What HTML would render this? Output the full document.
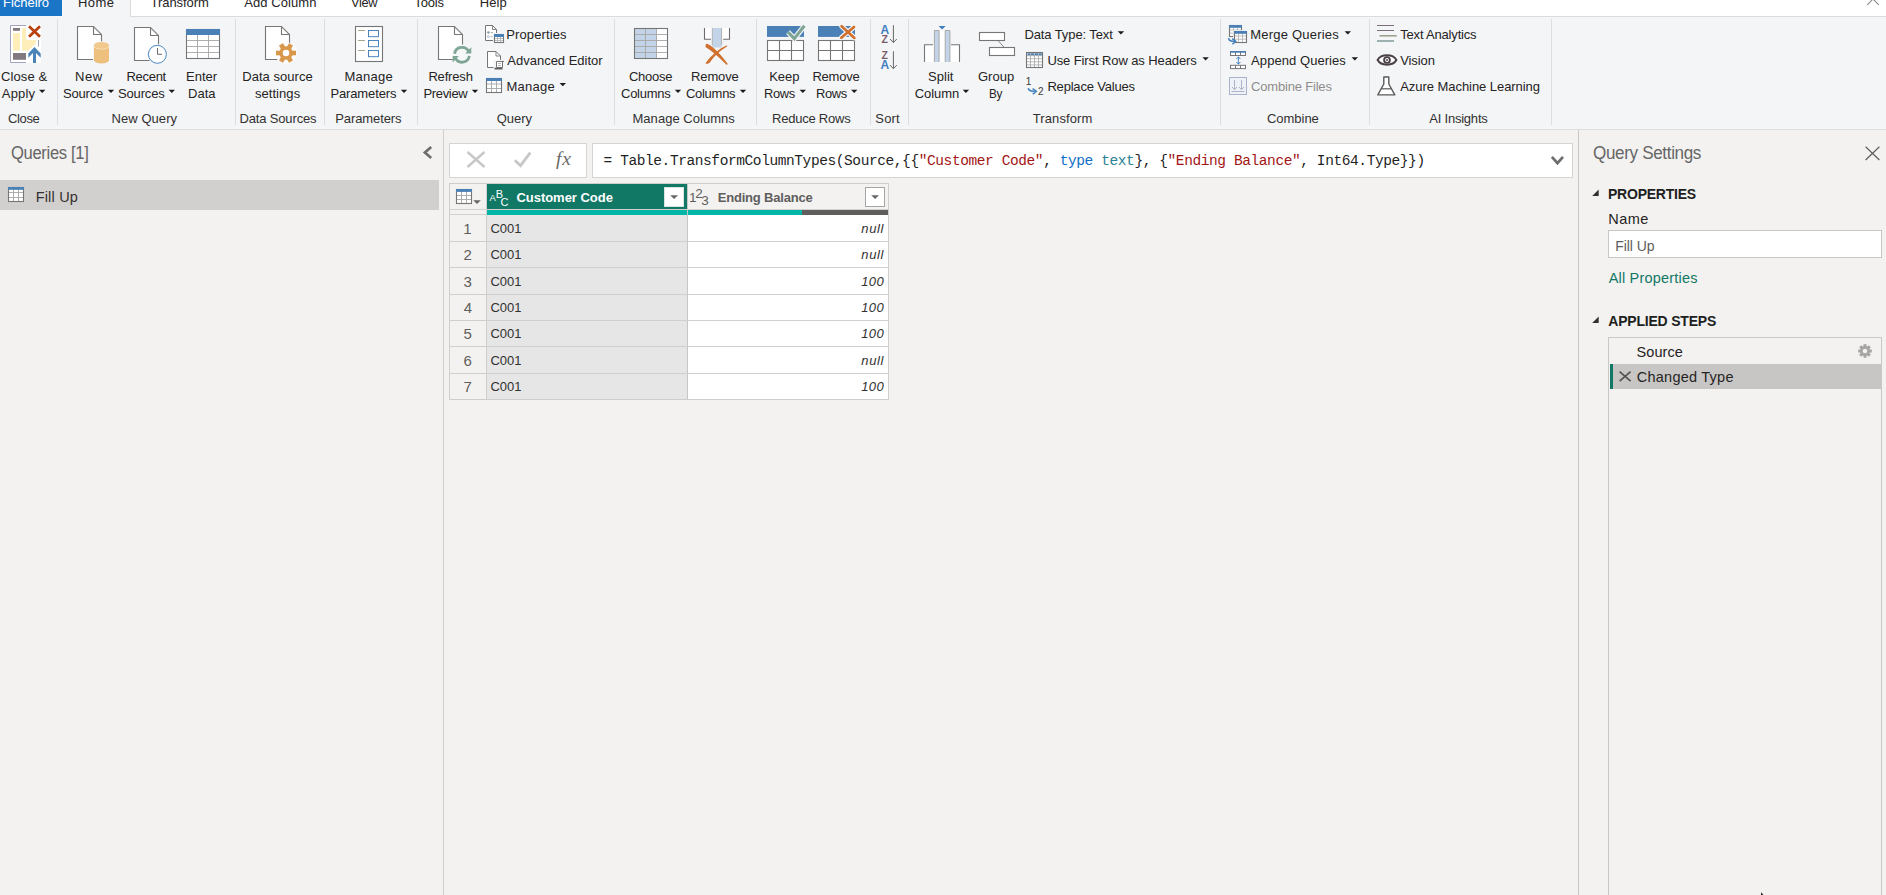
<!DOCTYPE html>
<html lang="en"><head><meta charset="utf-8"><title>Power Query Editor</title>
<style>
html,body{margin:0;padding:0}
body{width:1886px;height:895px;overflow:hidden;position:relative;background:#f3f2f1;font-family:"Liberation Sans",sans-serif}
.t{position:absolute;white-space:pre;line-height:1;transform-origin:0 50%}
.b{position:absolute;box-sizing:border-box}
svg{position:absolute;left:0;top:0;overflow:visible}
.f{position:absolute;white-space:pre;line-height:1;font-family:"Liberation Mono",monospace;color:#1f1f1f}
.f .s{color:#a31515}.f .k{color:#0f6fc6}.f .y{color:#2a8295}
</style></head>
<body>
<div class="b" style="left:0px;top:0px;width:1886px;height:17px;background:#ffffff;"></div>
<div class="b" style="left:130px;top:16px;width:1756px;height:1px;background:#dadbdc;"></div>
<div class="b" style="left:62px;top:0px;width:69px;height:17px;background:#f4f5f7;border-right:1px solid #dadbdc;"></div>
<div class="b" style="left:0px;top:0px;width:62px;height:16px;background:#1a75c7;"></div>
<div class="b" style="left:0px;top:16px;width:62px;height:1px;background:#f4f5f7;"></div>
<div class="b" style="left:0px;top:17px;width:1886px;height:112px;background:#f4f5f7;"></div>
<div class="b" style="left:0px;top:129px;width:1886px;height:1px;background:#dddddf;"></div>
<div class="b" style="left:57px;top:19px;width:1px;height:106px;background:#dddedf;"></div>
<div class="b" style="left:235px;top:19px;width:1px;height:106px;background:#dddedf;"></div>
<div class="b" style="left:324px;top:19px;width:1px;height:106px;background:#dddedf;"></div>
<div class="b" style="left:417px;top:19px;width:1px;height:106px;background:#dddedf;"></div>
<div class="b" style="left:614px;top:19px;width:1px;height:106px;background:#dddedf;"></div>
<div class="b" style="left:756px;top:19px;width:1px;height:106px;background:#dddedf;"></div>
<div class="b" style="left:870px;top:19px;width:1px;height:106px;background:#dddedf;"></div>
<div class="b" style="left:908px;top:19px;width:1px;height:106px;background:#dddedf;"></div>
<div class="b" style="left:1220px;top:19px;width:1px;height:106px;background:#dddedf;"></div>
<div class="b" style="left:1369px;top:19px;width:1px;height:106px;background:#dddedf;"></div>
<div class="b" style="left:1551px;top:19px;width:1px;height:106px;background:#dddedf;"></div>
<div class="b" style="left:0px;top:180px;width:439px;height:30px;background:#d2d0ce;"></div>
<div class="b" style="left:443px;top:130px;width:1px;height:765px;background:#d0cfce;"></div>
<div class="b" style="left:1578px;top:130px;width:1px;height:765px;background:#c8c7c6;"></div>
<div class="b" style="left:449px;top:143px;width:138px;height:35px;background:#ffffff;border:1px solid #d6d5d4;"></div>
<div class="b" style="left:592px;top:143px;width:981px;height:35px;background:#ffffff;border:1px solid #d6d5d4;"></div>
<div class="b" style="left:449px;top:183px;width:440px;height:217px;background:#f3f2f1;border:1px solid #cfcecd;"></div>
<div class="b" style="left:487px;top:184px;width:200px;height:25px;background:#117865;"></div>
<div class="b" style="left:450px;top:209px;width:438px;height:1px;background:#d2d1d0;"></div>
<div class="b" style="left:450px;top:214px;width:37px;height:1px;background:#d2d1d0;"></div>
<div class="b" style="left:487px;top:210px;width:200px;height:5px;background:#01b5a7;"></div>
<div class="b" style="left:688px;top:210px;width:114px;height:5px;background:#01b5a7;"></div>
<div class="b" style="left:802px;top:210px;width:86px;height:5px;background:#605e5c;"></div>
<div class="b" style="left:487px;top:215px;width:200px;height:184px;background:#e6e6e6;"></div>
<div class="b" style="left:688px;top:215px;width:200px;height:184px;background:#ffffff;"></div>
<div class="b" style="left:486px;top:184px;width:1px;height:215px;background:#cfcecd;"></div>
<div class="b" style="left:687px;top:184px;width:1px;height:215px;background:#c8c7c6;"></div>
<div class="b" style="left:450px;top:241px;width:438px;height:1px;background:#d0cfce;"></div>
<div class="b" style="left:450px;top:267px;width:438px;height:1px;background:#d0cfce;"></div>
<div class="b" style="left:450px;top:294px;width:438px;height:1px;background:#d0cfce;"></div>
<div class="b" style="left:450px;top:320px;width:438px;height:1px;background:#d0cfce;"></div>
<div class="b" style="left:450px;top:346px;width:438px;height:1px;background:#d0cfce;"></div>
<div class="b" style="left:450px;top:373px;width:438px;height:1px;background:#d0cfce;"></div>
<div class="b" style="left:664px;top:187px;width:20px;height:20px;background:#ffffff;border:1px solid #d8e4e0;"></div>
<div class="b" style="left:865px;top:187px;width:20px;height:20px;background:#ffffff;border:1px solid #a6a5a4;"></div>
<div class="b" style="left:1608px;top:230px;width:274px;height:28px;background:#ffffff;border:1px solid #c8c7c6;"></div>
<div class="b" style="left:1608px;top:337px;width:274px;height:570px;border:1px solid #c8c7c6;"></div>
<div class="b" style="left:1610px;top:364px;width:271px;height:25px;background:#c8c6c4;"></div>
<div class="b" style="left:1610px;top:364px;width:3px;height:25px;background:#117865;"></div>
<svg width="1886" height="895" viewBox="0 0 1886 895"><rect x="10" y="25" width="31" height="38" fill="#fff"/><path d="M26,25.5H10.5V62.5H26" fill="none" stroke="#a3a3bd" stroke-width="1"/><path d="M38.5,40V46.5" stroke="#a3a3bd" stroke-width="1"/><rect x="13" y="28" width="7" height="2.8" fill="#807a80"/><rect x="13" y="33" width="7" height="17.8" fill="#fdeeba"/><path d="M22,28H26V38.5L27.5,40H36.2V43L28,50.8H22Z" fill="#fdeeba"/><rect x="13" y="53" width="13" height="6.8" fill="#807a80"/><path d="M29,26.3L40,36.8M40,26.3L29,36.8" stroke="#b8410f" stroke-width="2.7"/><path d="M34.5,47L28.3,53.5V57.8L33,53V63H36V53L40.7,57.8V53.5Z" fill="#4a84b8"/><path d="M77.5,26.5H93.5L101.5,34.5V59.5H77.5Z" fill="#fff" stroke="#767676" stroke-width="1.1" stroke-linejoin="miter"/><path d="M93.5,26.5V34.5H101.5" fill="none" stroke="#767676" stroke-width="1.1"/><path d="M93.5,26.5L101.5,34.5" stroke="#9a9a86" stroke-width="0.45"/><path d="M93,45V60.5A8,3.2 0 0 0 110,60.5V45Z" fill="#f4f5f7"/><ellipse cx="101.5" cy="45" rx="8.5" ry="3.8" fill="#f4f5f7"/><path d="M94,45V60.3A7.5,3.2 0 0 0 109,60.3V45Z" fill="#eec07e"/><ellipse cx="101.5" cy="45.2" rx="7.5" ry="3.2" fill="#f1c88d"/><path d="M94,46A7.5,3.2 0 0 0 109,46" fill="none" stroke="#fbe9cf" stroke-width="0.8"/><path d="M134.5,27.5H150.5L158.5,35.5V60.5H134.5Z" fill="#fff" stroke="#767676" stroke-width="1.1" stroke-linejoin="miter"/><path d="M150.5,27.5V35.5H158.5" fill="none" stroke="#767676" stroke-width="1.1"/><path d="M150.5,27.5L158.5,35.5" stroke="#9a9a86" stroke-width="0.45"/><circle cx="157.4" cy="54.3" r="10.2" fill="#f8f9fb"/><circle cx="157.4" cy="54.3" r="9" fill="#fff" stroke="#4a86c0" stroke-width="1"/><path d="M157.5,48V54.3H162" fill="none" stroke="#6a6a6a" stroke-width="1"/><rect x="186.5" y="29.5" width="33.0" height="29.0" fill="#fff"/><path d="M197.5,29.5V58.5" stroke="#a6a6a6" stroke-width="0.9"/><path d="M208.5,29.5V58.5" stroke="#a6a6a6" stroke-width="0.9"/><path d="M186.5,40.5H219.5" stroke="#a6a6a6" stroke-width="0.9"/><path d="M186.5,46.5H219.5" stroke="#a6a6a6" stroke-width="0.9"/><path d="M186.5,52.5H219.5" stroke="#a6a6a6" stroke-width="0.9"/><rect x="186.5" y="29.5" width="33.0" height="29.0" fill="none" stroke="#767676" stroke-width="1.1"/><rect x="186" y="29" width="34" height="6" fill="#4a80b5"/><path d="M265.5,26.5H281.5L289.5,34.5V59.5H265.5Z" fill="#fff" stroke="#767676" stroke-width="1.1" stroke-linejoin="miter"/><path d="M281.5,26.5V34.5H289.5" fill="none" stroke="#767676" stroke-width="1.1"/><path d="M281.5,26.5L289.5,34.5" stroke="#9a9a86" stroke-width="0.45"/><circle cx="286" cy="53" r="10.8" fill="#fbfbfc"/><rect x="290" y="50.7" width="6" height="4.6" fill="#d9974a" transform="rotate(0 286 53)"/><rect x="290" y="50.7" width="6" height="4.6" fill="#d9974a" transform="rotate(60 286 53)"/><rect x="290" y="50.7" width="6" height="4.6" fill="#d9974a" transform="rotate(120 286 53)"/><rect x="290" y="50.7" width="6" height="4.6" fill="#d9974a" transform="rotate(180 286 53)"/><rect x="290" y="50.7" width="6" height="4.6" fill="#d9974a" transform="rotate(240 286 53)"/><rect x="290" y="50.7" width="6" height="4.6" fill="#d9974a" transform="rotate(300 286 53)"/><circle cx="286" cy="53" r="6.7" fill="#d9974a"/><circle cx="286" cy="53" r="3.3" fill="#fff"/><rect x="355.5" y="26.5" width="27" height="35" fill="#fff" stroke="#767676" stroke-width="1.1"/><path d="M358,30.5H365" stroke="#9c9c80" stroke-width="0.9"/><rect x="368.5" y="30.5" width="10" height="6.2" fill="#fff" stroke="#3b79b7" stroke-width="0.9"/><path d="M358,40.5H365" stroke="#9c9c80" stroke-width="0.9"/><rect x="368.5" y="40.5" width="10" height="6.2" fill="#fff" stroke="#3b79b7" stroke-width="0.9"/><path d="M358,50.5H365" stroke="#9c9c80" stroke-width="0.9"/><rect x="368.5" y="50.5" width="10" height="6.2" fill="#fff" stroke="#3b79b7" stroke-width="0.9"/><path d="M438.5,26.5H454.5L462.5,34.5V59.5H438.5Z" fill="#fff" stroke="#767676" stroke-width="1.1" stroke-linejoin="miter"/><path d="M454.5,26.5V34.5H462.5" fill="none" stroke="#767676" stroke-width="1.1"/><path d="M454.5,26.5L462.5,34.5" stroke="#9a9a86" stroke-width="0.45"/><circle cx="462" cy="54.8" r="10.2" fill="#f6f7f9"/><path d="M454.67,53.77A7.4,7.4 0 0 1 468.86,52.03" fill="none" stroke="#7fa595" stroke-width="2.8"/><path d="M465.20,53.50H471.30V47.20Z" fill="#7fa595"/><path d="M469.33,55.83A7.4,7.4 0 0 1 455.14,57.57" fill="none" stroke="#7fa595" stroke-width="2.8"/><path d="M458.80,56.10H452.70V62.40Z" fill="#7fa595"/><path d="M485.5,25.5H492.5L496.5,29.5V40.5H485.5Z" fill="#fff" stroke="#767676" stroke-width="1"/><path d="M492.5,25.5V29.5H496.5" fill="none" stroke="#767676" stroke-width="0.9"/><circle cx="488.4" cy="32.5" r="1.2" fill="#8a99a8"/><circle cx="488.4" cy="36.6" r="1" fill="none" stroke="#8a99a8" stroke-width="0.6"/><path d="M490.8,32.5H493M490.8,36.6H492.6" stroke="#9a9a9a" stroke-width="0.8"/><rect x="493" y="33" width="11.5" height="10.5" fill="#f4f5f7"/><rect x="494.5" y="34.5" width="9.0" height="8.0" fill="#fff"/><path d="M497.5,34.5V42.5" stroke="#a6a6a6" stroke-width="0.7"/><path d="M500.5,34.5V42.5" stroke="#a6a6a6" stroke-width="0.7"/><path d="M494.5,38.5H503.5" stroke="#a6a6a6" stroke-width="0.7"/><path d="M494.5,40.5H503.5" stroke="#a6a6a6" stroke-width="0.7"/><rect x="494.5" y="34.5" width="9.0" height="8.0" fill="none" stroke="#767676" stroke-width="1.1"/><rect x="494" y="34" width="10" height="3" fill="#4a80b5"/><path d="M487.5,51.5H496L500.5,56V67.5H487.5Z" fill="#fff" stroke="#767676" stroke-width="1"/><path d="M496,51.5V56H500.5" fill="none" stroke="#767676" stroke-width="0.9"/><rect x="493.5" y="60" width="11" height="10.5" fill="#f4f5f7"/><path d="M496.5,61.5H504M496.5,61.5V67.5H502.5V61.5" fill="#fff" stroke="#767676" stroke-width="1"/><path d="M498,63.5H501M498,65.5H501" stroke="#9a9a9a" stroke-width="0.7"/><path d="M494.5,68.6H502.5" stroke="#5e5e5e" stroke-width="1.8"/><rect x="486.5" y="78.5" width="15.0" height="14.0" fill="#fff"/><path d="M491.5,78.5V92.5" stroke="#a6a6a6" stroke-width="0.9"/><path d="M496.5,78.5V92.5" stroke="#a6a6a6" stroke-width="0.9"/><path d="M486.5,84H501.5" stroke="#a6a6a6" stroke-width="0.9"/><path d="M486.5,88.5H501.5" stroke="#a6a6a6" stroke-width="0.9"/><rect x="486.5" y="78.5" width="15.0" height="14.0" fill="none" stroke="#767676" stroke-width="1.1"/><rect x="486" y="78" width="16" height="3" fill="#4a80b5"/><rect x="634.5" y="28.5" width="33" height="30" fill="#fff"/><rect x="634.5" y="28.5" width="22" height="30" fill="#c3d4e8"/><path d="M645.5,28.5V58.5" stroke="#a6a6a6" stroke-width="0.9"/><path d="M656.5,28.5V58.5" stroke="#a6a6a6" stroke-width="0.9"/><path d="M634.5,34.5H667.5" stroke="#a6a6a6" stroke-width="0.9"/><path d="M634.5,40.5H667.5" stroke="#a6a6a6" stroke-width="0.9"/><path d="M634.5,46.5H667.5" stroke="#a6a6a6" stroke-width="0.9"/><path d="M634.5,52.5H667.5" stroke="#a6a6a6" stroke-width="0.9"/><rect x="634.5" y="28.5" width="33.0" height="30.0" fill="none" stroke="#767676" stroke-width="1.1"/><rect x="704" y="28" width="26" height="11.7" fill="#fff"/><path d="M704.5,28V39.2H711M729.5,28V39.2H723.2" fill="none" stroke="#6f6a70" stroke-width="1.1"/><rect x="712.3" y="28" width="9.3" height="19.5" fill="#c3d4e8"/><path d="M712.3,28V45M721.6,28V45" stroke="#ababab" stroke-width="0.9"/><path d="M706.6,44.5C712,46 720,55 726.8,63.9C720,57 712,50 706.3,46.5Z" fill="#d0702f" stroke="#d0702f" stroke-width="1.6" stroke-linejoin="round"/><path d="M726.6,46C720,48.5 711,56 706.3,63.2C708.5,63.4 709,62.5 709.5,62C713,56.5 720,50 726.6,46Z" fill="#d0702f" stroke="#d0702f" stroke-width="1.2" stroke-linejoin="round"/><rect x="767" y="26" width="37" height="10.9" fill="#4a80b5"/><rect x="767.5" y="40.5" width="36.0" height="20.0" fill="#fff"/><path d="M779.5,40.5V60.5" stroke="#767676" stroke-width="1.1"/><path d="M791.5,40.5V60.5" stroke="#767676" stroke-width="1.1"/><path d="M767.5,50.5H803.5" stroke="#767676" stroke-width="1.1"/><rect x="767.5" y="40.5" width="36.0" height="20.0" fill="none" stroke="#767676" stroke-width="1.1"/><path d="M788,32.2L794.3,38.6L804.4,25.8" fill="none" stroke="#f4f5f7" stroke-width="5.4"/><path d="M788,32.2L794.3,38.6L804.4,25.8" fill="none" stroke="#7fa595" stroke-width="3.1"/><rect x="818" y="26" width="37" height="10.9" fill="#4a80b5"/><rect x="818.5" y="40.5" width="36.0" height="20.0" fill="#fff"/><path d="M830.5,40.5V60.5" stroke="#767676" stroke-width="1.1"/><path d="M842.5,40.5V60.5" stroke="#767676" stroke-width="1.1"/><path d="M818.5,50.5H854.5" stroke="#767676" stroke-width="1.1"/><rect x="818.5" y="40.5" width="36.0" height="20.0" fill="none" stroke="#767676" stroke-width="1.1"/><path d="M841.6,26.2L854.4,37.9M854,27L841.3,37.7" stroke="#f4f5f7" stroke-width="5" stroke-linecap="round"/><path d="M841.6,26.2L854.4,37.9M854,27L841.3,37.7" stroke="#d0702f" stroke-width="2.7" stroke-linecap="round"/><path d="M893.4,25.2V42.6M890,39.0L893.4,42.6L896.8,39.0" fill="none" stroke="#666" stroke-width="1"/><path d="M893.4,51.3V68.7M890,65.10000000000001L893.4,68.7L896.8,65.10000000000001" fill="none" stroke="#666" stroke-width="1"/><rect x="924" y="44.5" width="36" height="17.5" fill="#fff"/><rect x="934" y="30.5" width="16" height="31.5" fill="#fff"/><path d="M924.5,62V44.8H933M959.5,62V44.8H951" fill="none" stroke="#767676" stroke-width="1.1"/><rect x="934.5" y="30.5" width="4.5" height="31.5" fill="#c3d4e8"/><rect x="945.3" y="30.5" width="4.5" height="31.5" fill="#c3d4e8"/><path d="M934.4,30.4V62M939.1,30.4V62M945.2,30.4V62M949.9,30.4V62M934.4,30.5H939.1M945.2,30.5H949.9" stroke="#a0a0a0" stroke-width="0.9" fill="none"/><path d="M938.6,26.1H945.6L942.1,29.6Z" fill="#3f7fbf"/><rect x="979.5" y="32.5" width="25" height="8" fill="#fff" stroke="#767676" stroke-width="1.1"/><rect x="989.5" y="47.5" width="25" height="8" fill="#fff" stroke="#767676" stroke-width="1.1"/><path d="M998,40.6L1004.2,47.4" stroke="#767676" stroke-width="0.9"/><rect x="1026.5" y="52.5" width="16.0" height="15.0" fill="#fff"/><path d="M1030.5,52.5V67.5" stroke="#a6a6a6" stroke-width="0.8"/><path d="M1034.5,52.5V67.5" stroke="#a6a6a6" stroke-width="0.8"/><path d="M1038.5,52.5V67.5" stroke="#a6a6a6" stroke-width="0.8"/><path d="M1026.5,55.7H1042.5" stroke="#a6a6a6" stroke-width="0.8"/><path d="M1026.5,58.7H1042.5" stroke="#a6a6a6" stroke-width="0.8"/><path d="M1026.5,61.8H1042.5" stroke="#a6a6a6" stroke-width="0.8"/><path d="M1026.5,64.9H1042.5" stroke="#a6a6a6" stroke-width="0.8"/><rect x="1026.5" y="52.5" width="16.0" height="15.0" fill="none" stroke="#767676" stroke-width="1.1"/><path d="M1027.5,54.2H1030M1031,54.2H1034M1035,54.2H1038M1039,54.2H1041.8" stroke="#4a80b5" stroke-width="2"/><path d="M1028.3,88.2C1028.8,91 1031,91.6 1034.6,91.2" fill="none" stroke="#3f7fbf" stroke-width="1.5"/><path d="M1032.6,88.6L1036.3,91.2L1032.8,94.2" fill="none" stroke="#3f7fbf" stroke-width="1.5"/><rect x="1229.5" y="25.5" width="12.0" height="11.0" fill="#fff"/><path d="M1233.5,25.5V36.5" stroke="#a6a6a6" stroke-width="0.7"/><path d="M1237.5,25.5V36.5" stroke="#a6a6a6" stroke-width="0.7"/><path d="M1229.5,30H1241.5" stroke="#a6a6a6" stroke-width="0.7"/><path d="M1229.5,33.2H1241.5" stroke="#a6a6a6" stroke-width="0.7"/><rect x="1229.5" y="25.5" width="12.0" height="11.0" fill="none" stroke="#767676" stroke-width="1.1"/><rect x="1229" y="25" width="13" height="2.8" fill="#4a80b5"/><rect x="1233.2" y="30.2" width="14.6" height="13.4" fill="#f4f5f7"/><rect x="1234.5" y="31.5" width="12.0" height="11.0" fill="#fff"/><path d="M1238.5,31.5V42.5" stroke="#a6a6a6" stroke-width="0.7"/><path d="M1242.5,31.5V42.5" stroke="#a6a6a6" stroke-width="0.7"/><path d="M1234.5,36H1246.5" stroke="#a6a6a6" stroke-width="0.7"/><path d="M1234.5,39.2H1246.5" stroke="#a6a6a6" stroke-width="0.7"/><rect x="1234.5" y="31.5" width="12.0" height="11.0" fill="none" stroke="#767676" stroke-width="1.1"/><rect x="1234" y="31" width="13" height="2.8" fill="#4a80b5"/><path d="M1228.6,38.2C1229,41 1231,41.6 1234,41.2" fill="none" stroke="#3f7fbf" stroke-width="1.5"/><path d="M1232.2,38.6L1235.8,41.2L1232.4,44.2" fill="none" stroke="#3f7fbf" stroke-width="1.5"/><rect x="1230.5" y="51.8" width="15.0" height="3.700000000000003" fill="#fff"/><path d="M1235.5,51.8V55.5" stroke="#767676" stroke-width="1"/><path d="M1240.5,51.8V55.5" stroke="#767676" stroke-width="1"/><rect x="1230.5" y="51.8" width="15.0" height="3.700000000000003" fill="none" stroke="#767676" stroke-width="1"/><rect x="1230" y="51" width="16" height="1.6" fill="#4a80b5"/><rect x="1230.5" y="65.3" width="15.0" height="3.299999999999997" fill="#fff"/><path d="M1235.5,65.3V68.6" stroke="#767676" stroke-width="1"/><path d="M1240.5,65.3V68.6" stroke="#767676" stroke-width="1"/><rect x="1230.5" y="65.3" width="15.0" height="3.299999999999997" fill="none" stroke="#767676" stroke-width="1"/><path d="M1238.4,57V64M1236.4,59L1238.4,56.8L1240.4,59M1236.4,62L1238.4,64.2L1240.4,62" fill="none" stroke="#3f7fbf" stroke-width="0.9"/><rect x="1229.5" y="77.5" width="17" height="17" fill="#eef1f7" stroke="#a9b4cc" stroke-width="1"/><path d="M1234.5,80V89.5M1232,87L1234.5,89.6L1237,87M1241.5,80V89.5M1239,87L1241.5,89.6L1244,87M1231.5,91.5H1244.5" fill="none" stroke="#a3aec2" stroke-width="0.9"/><path d="M1377,25.5H1394M1377,30.5H1394" stroke="#7a6f78" stroke-width="1"/><path d="M1379.5,35.8H1396.8" stroke="#9b9b8a" stroke-width="1.5"/><path d="M1377,41H1394" stroke="#7f9a98" stroke-width="1.5"/><path d="M1377.6,60C1381,53.8 1393,53.8 1396.4,60C1393,66.2 1381,66.2 1377.6,60Z" fill="#fff" stroke="#4a4048" stroke-width="2"/><circle cx="1387" cy="60" r="2.9" fill="#fff" stroke="#4a4048" stroke-width="1.9"/><circle cx="1387" cy="60" r="1" fill="#4a4048"/><path d="M1383.8,77H1388.8V84L1394.8,94.9H1377.8L1383.8,84Z" fill="#fff" stroke="#5a5a5a" stroke-width="1.4" stroke-linejoin="round"/><path d="M1381.2,88.8H1391.4" stroke="#5a5a5a" stroke-width="1.2"/><path d="M39,89.8H45.4L42.2,93Z" fill="#1b1b1b"/><path d="M107.8,89.8H114.2L111.0,93Z" fill="#1b1b1b"/><path d="M168.6,89.8H175L171.8,93Z" fill="#1b1b1b"/><path d="M400.8,89.8H407.2L404.0,93Z" fill="#1b1b1b"/><path d="M471.8,89.8H478.2L475.0,93Z" fill="#1b1b1b"/><path d="M674.8,89.8H681.2L678.0,93Z" fill="#1b1b1b"/><path d="M739.8,89.8H746.2L743.0,93Z" fill="#1b1b1b"/><path d="M799.6,89.8H806L802.8,93Z" fill="#1b1b1b"/><path d="M851,89.8H857.4L854.2,93Z" fill="#1b1b1b"/><path d="M962.7,89.8H969.1L965.9000000000001,93Z" fill="#1b1b1b"/><path d="M559.6,83H566L562.8,86.2Z" fill="#1b1b1b"/><path d="M1117.7,31.2H1124.1L1120.9,34.4Z" fill="#1b1b1b"/><path d="M1202.4,57.2H1208.8L1205.6,60.400000000000006Z" fill="#1b1b1b"/><path d="M1344.6,31.2H1351L1347.8,34.4Z" fill="#1b1b1b"/><path d="M1351.6,57.2H1358L1354.8,60.400000000000006Z" fill="#1b1b1b"/><path d="M1867.2,4.8L1873,-1L1878.8,4.8" fill="none" stroke="#8a8a8a" stroke-width="1.1"/><path d="M431.2,146.9L424.9,152.5L431.2,158.1" fill="none" stroke="#6e6d6c" stroke-width="2.7"/><rect x="8.5" y="187.5" width="15.0" height="14.0" fill="#fff"/><path d="M13.5,187.5V201.5" stroke="#a6a6a6" stroke-width="0.9"/><path d="M18.5,187.5V201.5" stroke="#a6a6a6" stroke-width="0.9"/><path d="M8.5,192.5H23.5" stroke="#a6a6a6" stroke-width="0.9"/><path d="M8.5,197.5H23.5" stroke="#a6a6a6" stroke-width="0.9"/><rect x="8.5" y="187.5" width="15.0" height="14.0" fill="none" stroke="#767676" stroke-width="1.1"/><rect x="8" y="187" width="16" height="2.8" fill="#4a80b5"/><path d="M467.5,152L484.5,167M484.5,152L467.5,167" stroke="#c8c7c6" stroke-width="2.4"/><path d="M514.8,160.2L520.5,165.6L530.3,152.6" fill="none" stroke="#c8c7c6" stroke-width="2.8"/><path d="M1551.9,156.8L1557.45,163.1L1563,156.8" fill="none" stroke="#6e6d6c" stroke-width="2.7"/><rect x="456.5" y="189.5" width="15.0" height="14.0" fill="#fff"/><path d="M461.5,189.5V203.5" stroke="#a6a6a6" stroke-width="0.9"/><path d="M466.5,189.5V203.5" stroke="#a6a6a6" stroke-width="0.9"/><path d="M456.5,195.5H471.5" stroke="#a6a6a6" stroke-width="0.9"/><path d="M456.5,199.5H471.5" stroke="#a6a6a6" stroke-width="0.9"/><rect x="456.5" y="189.5" width="15.0" height="14.0" fill="none" stroke="#767676" stroke-width="1.1"/><rect x="456" y="189" width="16" height="2.9" fill="#4a80b5"/><path d="M473.2,200.2H480.8L477.0,204Z" fill="#666666"/><path d="M670.2,195.2H678L674.1,199Z" fill="#666666"/><path d="M871.2,195.2H879L875.1,199Z" fill="#666666"/><path d="M1865.6,146.8L1879.4,160M1879.4,146.8L1865.6,160" stroke="#5f5e5d" stroke-width="1.2"/><path d="M1598.7,189.4V195.9H1592.2Z" fill="#323130"/><path d="M1598.7,316.4V322.9H1592.2Z" fill="#323130"/><path d="M1619.6,371.6L1630.6,381.2M1630.6,371.6L1619.6,381.2" stroke="#55534f" stroke-width="1.7"/><rect x="1868" y="349.5" width="3.8" height="3" fill="#a6a5a4" transform="rotate(0 1865 351)"/><rect x="1868" y="349.5" width="3.8" height="3" fill="#a6a5a4" transform="rotate(45 1865 351)"/><rect x="1868" y="349.5" width="3.8" height="3" fill="#a6a5a4" transform="rotate(90 1865 351)"/><rect x="1868" y="349.5" width="3.8" height="3" fill="#a6a5a4" transform="rotate(135 1865 351)"/><rect x="1868" y="349.5" width="3.8" height="3" fill="#a6a5a4" transform="rotate(180 1865 351)"/><rect x="1868" y="349.5" width="3.8" height="3" fill="#a6a5a4" transform="rotate(225 1865 351)"/><rect x="1868" y="349.5" width="3.8" height="3" fill="#a6a5a4" transform="rotate(270 1865 351)"/><rect x="1868" y="349.5" width="3.8" height="3" fill="#a6a5a4" transform="rotate(315 1865 351)"/><circle cx="1865" cy="351" r="4.9" fill="#a6a5a4"/><circle cx="1865" cy="351" r="2.3" fill="#f3f2f1"/><path d="M1761,892.3L1761,895L1763.5,895Z" fill="#222"/></svg>
<span class="t" style="left:3.00px;top:-4px;font-size:13px;color:#ffffff;letter-spacing:-0.026px;">Ficheiro</span>
<span class="t" style="left:78.00px;top:-4px;font-size:13px;color:#252423;letter-spacing:0.458px;">Home</span>
<span class="t" style="left:150.62px;top:-4px;font-size:13px;color:#252423;letter-spacing:-0.078px;">Transform</span>
<span class="t" style="left:244.36px;top:-4px;font-size:13px;color:#252423;letter-spacing:0.053px;">Add Column</span>
<span class="t" style="left:351.33px;top:-4px;font-size:13px;color:#252423;letter-spacing:-0.350px;transform:scaleX(0.9802);">View</span>
<span class="t" style="left:414.32px;top:-4px;font-size:13px;color:#252423;letter-spacing:-0.140px;">Tools</span>
<span class="t" style="left:479.70px;top:-4px;font-size:13px;color:#252423;letter-spacing:0.142px;">Help</span>
<span class="t" style="left:0.90px;top:70px;font-size:13px;color:#252423;letter-spacing:0.124px;">Close &amp;</span>
<span class="t" style="left:1.86px;top:87px;font-size:13px;color:#252423;letter-spacing:0.162px;">Apply</span>
<span class="t" style="left:75.00px;top:70px;font-size:13px;color:#252423;letter-spacing:0.523px;">New</span>
<span class="t" style="left:63.00px;top:87px;font-size:13px;color:#252423;letter-spacing:-0.177px;">Source</span>
<span class="t" style="left:126.50px;top:70px;font-size:13px;color:#252423;letter-spacing:-0.300px;">Recent</span>
<span class="t" style="left:118.00px;top:87px;font-size:13px;color:#252423;letter-spacing:-0.152px;">Sources</span>
<span class="t" style="left:186.00px;top:70px;font-size:13px;color:#252423;">Enter</span>
<span class="t" style="left:188.00px;top:87px;font-size:13px;color:#252423;letter-spacing:0.007px;">Data</span>
<span class="t" style="left:242.25px;top:70px;font-size:13px;color:#252423;letter-spacing:0.042px;">Data source</span>
<span class="t" style="left:254.88px;top:87px;font-size:13px;color:#252423;letter-spacing:0.066px;">settings</span>
<span class="t" style="left:344.40px;top:70px;font-size:13px;color:#252423;letter-spacing:0.255px;">Manage</span>
<span class="t" style="left:330.40px;top:87px;font-size:13px;color:#252423;letter-spacing:-0.121px;">Parameters</span>
<span class="t" style="left:428.40px;top:70px;font-size:13px;color:#252423;letter-spacing:-0.169px;">Refresh</span>
<span class="t" style="left:423.40px;top:87px;font-size:13px;color:#252423;letter-spacing:-0.315px;">Preview</span>
<span class="t" style="left:629.00px;top:70px;font-size:13px;color:#252423;letter-spacing:-0.265px;">Choose</span>
<span class="t" style="left:621.00px;top:87px;font-size:13px;color:#252423;letter-spacing:-0.257px;">Columns</span>
<span class="t" style="left:691.00px;top:70px;font-size:13px;color:#252423;letter-spacing:-0.120px;">Remove</span>
<span class="t" style="left:685.90px;top:87px;font-size:13px;color:#252423;letter-spacing:-0.265px;">Columns</span>
<span class="t" style="left:769.25px;top:70px;font-size:13px;color:#252423;letter-spacing:-0.083px;">Keep</span>
<span class="t" style="left:764.41px;top:87px;font-size:13px;color:#252423;letter-spacing:-0.350px;transform:scaleX(0.9883);">Rows</span>
<span class="t" style="left:812.40px;top:70px;font-size:13px;color:#252423;letter-spacing:-0.200px;">Remove</span>
<span class="t" style="left:815.51px;top:87px;font-size:13px;color:#252423;letter-spacing:-0.350px;transform:scaleX(0.9933);">Rows</span>
<span class="t" style="left:928.00px;top:70px;font-size:13px;color:#252423;letter-spacing:0.031px;">Split</span>
<span class="t" style="left:914.80px;top:87px;font-size:13px;color:#252423;letter-spacing:-0.080px;">Column</span>
<span class="t" style="left:977.90px;top:70px;font-size:13px;color:#252423;letter-spacing:0.050px;">Group</span>
<span class="t" style="left:989.10px;top:87px;font-size:13px;color:#252423;letter-spacing:-0.350px;transform:scaleX(0.8983);">By</span>
<span class="t" style="left:506.25px;top:28px;font-size:13px;color:#252423;letter-spacing:0.118px;">Properties</span>
<span class="t" style="left:507.36px;top:54px;font-size:13px;color:#252423;letter-spacing:-0.012px;">Advanced Editor</span>
<span class="t" style="left:506.50px;top:80px;font-size:13px;color:#252423;letter-spacing:0.265px;">Manage</span>
<span class="t" style="left:1024.40px;top:28px;font-size:13px;color:#252423;letter-spacing:-0.099px;">Data Type: Text</span>
<span class="t" style="left:1047.40px;top:54px;font-size:13px;color:#252423;letter-spacing:-0.100px;">Use First Row as Headers</span>
<span class="t" style="left:1047.40px;top:80px;font-size:13px;color:#252423;letter-spacing:-0.191px;">Replace Values</span>
<span class="t" style="left:1250.25px;top:28px;font-size:13px;color:#252423;letter-spacing:0.206px;">Merge Queries</span>
<span class="t" style="left:1251.11px;top:54px;font-size:13px;color:#252423;letter-spacing:0.062px;">Append Queries</span>
<span class="t" style="left:1251.00px;top:80px;font-size:13px;color:#8f8d8b;letter-spacing:-0.182px;">Combine Files</span>
<span class="t" style="left:1400.22px;top:28px;font-size:13px;color:#252423;letter-spacing:-0.183px;">Text Analytics</span>
<span class="t" style="left:1400.23px;top:54px;font-size:13px;color:#252423;letter-spacing:-0.086px;">Vision</span>
<span class="t" style="left:1400.26px;top:80px;font-size:13px;color:#252423;letter-spacing:-0.056px;">Azure Machine Learning</span>
<span class="t" style="left:7.90px;top:112px;font-size:13px;color:#323130;letter-spacing:-0.321px;">Close</span>
<span class="t" style="left:111.50px;top:112px;font-size:13px;color:#323130;letter-spacing:0.067px;">New Query</span>
<span class="t" style="left:239.40px;top:112px;font-size:13px;color:#323130;letter-spacing:-0.142px;">Data Sources</span>
<span class="t" style="left:335.25px;top:112px;font-size:13px;color:#323130;letter-spacing:-0.104px;">Parameters</span>
<span class="t" style="left:496.69px;top:112px;font-size:13px;color:#323130;letter-spacing:-0.044px;">Query</span>
<span class="t" style="left:632.50px;top:112px;font-size:13px;color:#323130;letter-spacing:0.032px;">Manage Columns</span>
<span class="t" style="left:772.10px;top:112px;font-size:13px;color:#323130;letter-spacing:-0.238px;">Reduce Rows</span>
<span class="t" style="left:875.25px;top:112px;font-size:13px;color:#323130;letter-spacing:0.205px;">Sort</span>
<span class="t" style="left:1032.82px;top:112px;font-size:13px;color:#323130;letter-spacing:0.085px;">Transform</span>
<span class="t" style="left:1266.90px;top:112px;font-size:13px;color:#323130;letter-spacing:-0.012px;">Combine</span>
<span class="t" style="left:1429.26px;top:112px;font-size:13px;color:#323130;letter-spacing:-0.217px;">AI Insights</span>
<span class="t" style="left:880.38px;top:24px;font-size:12px;color:#3f7fbf;font-weight:700;">A</span>
<span class="t" style="left:881.40px;top:34px;font-size:10.5px;color:#7a5c6c;font-weight:700;">Z</span>
<span class="t" style="left:881.40px;top:50px;font-size:10.5px;color:#7a5c6c;font-weight:700;">Z</span>
<span class="t" style="left:880.38px;top:59px;font-size:12px;color:#3f7fbf;font-weight:700;">A</span>
<span class="t" style="left:1025.80px;top:77px;font-size:10px;color:#3b3a39;">1</span>
<span class="t" style="left:1038.11px;top:87px;font-size:10px;color:#3b3a39;">2</span>
<span class="t" style="left:10.59px;top:145px;font-size:17.5px;color:#666666;letter-spacing:-0.350px;transform:scaleX(0.9473);">Queries [1]</span>
<span class="t" style="left:35.64px;top:190px;font-size:14.5px;color:#323130;letter-spacing:0.192px;">Fill Up</span>
<span class="t" style="left:555.81px;top:149px;font-size:19px;color:#6a6a6a;font-style:italic;font-family:'Liberation Serif', serif;letter-spacing:0.700px;transform:scaleX(1.0282);">fx</span>
<span class="t" style="left:516.44px;top:191px;font-size:13px;color:#ffffff;font-weight:700;letter-spacing:-0.029px;">Customer Code</span>
<span class="t" style="left:717.72px;top:191px;font-size:13px;color:#605e5c;font-weight:700;letter-spacing:-0.190px;">Ending Balance</span>
<span class="t" style="left:489.40px;top:193px;font-size:9.5px;color:#ffffff;">A</span>
<span class="t" style="left:495.67px;top:189px;font-size:11px;color:#ffffff;">B</span>
<span class="t" style="left:500.51px;top:197px;font-size:11px;color:#ffffff;">C</span>
<span class="t" style="left:689.10px;top:191px;font-size:13.5px;color:#605e5c;">1</span>
<span class="t" style="left:695.29px;top:187px;font-size:13.5px;color:#605e5c;">2</span>
<span class="t" style="left:701.30px;top:194px;font-size:13.5px;color:#605e5c;">3</span>
<span class="t" style="left:463.37px;top:221px;font-size:15px;color:#605e5c;">1</span>
<span class="t" style="left:490.40px;top:222px;font-size:13px;color:#323130;letter-spacing:0.012px;">C001</span>
<span class="t" style="left:861.28px;top:222px;font-size:13px;color:#323130;font-style:italic;letter-spacing:0.642px;">null</span>
<span class="t" style="left:463.54px;top:247px;font-size:15px;color:#605e5c;">2</span>
<span class="t" style="left:490.40px;top:248px;font-size:13px;color:#323130;letter-spacing:0.012px;">C001</span>
<span class="t" style="left:861.28px;top:248px;font-size:13px;color:#323130;font-style:italic;letter-spacing:0.642px;">null</span>
<span class="t" style="left:463.52px;top:274px;font-size:15px;color:#605e5c;">3</span>
<span class="t" style="left:490.40px;top:275px;font-size:13px;color:#323130;letter-spacing:0.012px;">C001</span>
<span class="t" style="left:861.16px;top:275px;font-size:13px;color:#323130;font-style:italic;letter-spacing:0.393px;">100</span>
<span class="t" style="left:463.69px;top:300px;font-size:15px;color:#605e5c;">4</span>
<span class="t" style="left:490.40px;top:301px;font-size:13px;color:#323130;letter-spacing:0.012px;">C001</span>
<span class="t" style="left:861.16px;top:301px;font-size:13px;color:#323130;font-style:italic;letter-spacing:0.393px;">100</span>
<span class="t" style="left:463.44px;top:326px;font-size:15px;color:#605e5c;">5</span>
<span class="t" style="left:490.40px;top:327px;font-size:13px;color:#323130;letter-spacing:0.012px;">C001</span>
<span class="t" style="left:861.16px;top:327px;font-size:13px;color:#323130;font-style:italic;letter-spacing:0.393px;">100</span>
<span class="t" style="left:463.49px;top:353px;font-size:15px;color:#605e5c;">6</span>
<span class="t" style="left:490.40px;top:354px;font-size:13px;color:#323130;letter-spacing:0.012px;">C001</span>
<span class="t" style="left:861.28px;top:354px;font-size:13px;color:#323130;font-style:italic;letter-spacing:0.642px;">null</span>
<span class="t" style="left:463.53px;top:379px;font-size:15px;color:#605e5c;">7</span>
<span class="t" style="left:490.40px;top:380px;font-size:13px;color:#323130;letter-spacing:0.012px;">C001</span>
<span class="t" style="left:861.16px;top:380px;font-size:13px;color:#323130;font-style:italic;letter-spacing:0.393px;">100</span>
<span class="t" style="left:1593.02px;top:145px;font-size:17.5px;color:#666666;letter-spacing:-0.350px;transform:scaleX(0.9748);">Query Settings</span>
<span class="t" style="left:1608.00px;top:187px;font-size:14px;color:#201f1e;font-weight:700;letter-spacing:-0.233px;">PROPERTIES</span>
<span class="t" style="left:1608.34px;top:212px;font-size:14.5px;color:#252423;letter-spacing:0.472px;">Name</span>
<span class="t" style="left:1615.16px;top:239px;font-size:14px;color:#605e5c;letter-spacing:-0.038px;">Fill Up</span>
<span class="t" style="left:1608.67px;top:271px;font-size:14.5px;color:#117865;letter-spacing:0.202px;">All Properties</span>
<span class="t" style="left:1608.35px;top:314px;font-size:14px;color:#201f1e;font-weight:700;letter-spacing:-0.215px;">APPLIED STEPS</span>
<span class="t" style="left:1636.46px;top:345px;font-size:14.5px;color:#252423;letter-spacing:0.106px;">Source</span>
<span class="t" style="left:1636.80px;top:370px;font-size:14.5px;color:#252423;letter-spacing:0.236px;">Changed Type</span>
<span class="f" style="left:603.56px;top:154px;font-size:14.5px;letter-spacing:-0.4078px">= Table.TransformColumnTypes(Source,{{<span class="s">"Customer Code"</span>, <span class="k">type</span> <span class="y">text</span>}, {<span class="s">"Ending Balance"</span>, Int64.Type}})</span>
</body></html>
